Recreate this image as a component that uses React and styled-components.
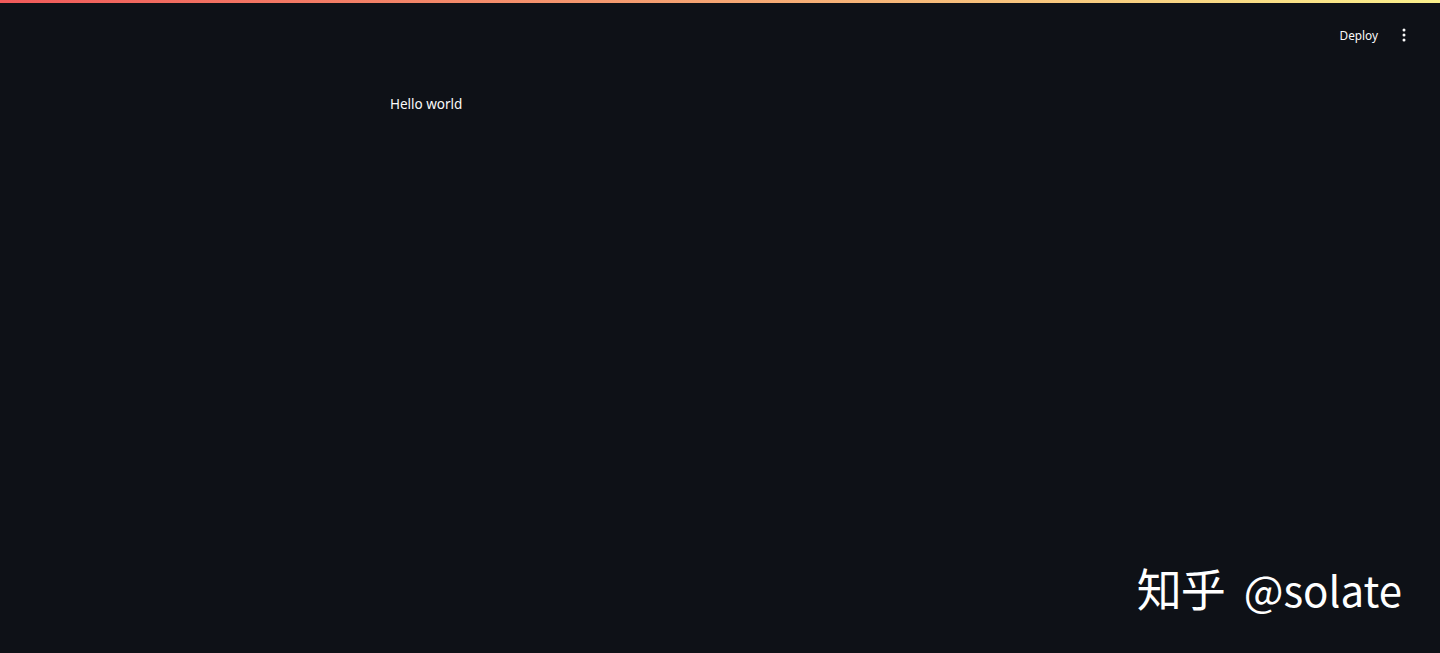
import React from "react";
import styled, { createGlobalStyle } from "styled-components";

const GlobalStyle = createGlobalStyle`
  html, body {
    margin: 0;
    padding: 0;
    background: #0e1117;
  }
  body {
    font-family: "Noto Sans", "Open Sans", sans-serif;
    color: #fafafa;
  }
`;

const Page = styled.div`
  position: relative;
  height: 653px;
  overflow: hidden;
  background: #0e1117;
`;

const Decoration = styled.div`
  height: 3px;
  background: linear-gradient(90deg, rgb(240, 90, 90), rgb(250, 240, 140));
`;

const Header = styled.header`
  height: 64px;
  display: flex;
  align-items: center;
  justify-content: flex-end;
  padding: 0 30px 0 0;
  gap: 18px;
`;

const DeployButton = styled.button`
  background: transparent;
  border: none;
  color: #fafafa;
  font-family: "Noto Sans", sans-serif;
  font-size: 11.8px;
  padding: 4px 2px;
  cursor: pointer;
`;

const MenuButton = styled.button`
  background: transparent;
  border: none;
  padding: 4px;
  display: flex;
  align-items: center;
  cursor: pointer;
`;

const Main = styled.main`
  max-width: 660px;
  margin: 0 auto;
  padding-top: 27px;
`;

const Text = styled.p`
  margin: 0;
  font-size: 13.5px;
  line-height: 20px;
  color: #fafafa;
`;

const Watermark = styled.div`
  position: absolute;
  right: 38px;
  bottom: 38px;
  display: flex;
  align-items: baseline;
  font-family: "Noto Sans CJK SC", "Noto Sans", sans-serif;
  font-size: 42px;
  line-height: 1.2;
  color: #ffffff;
  white-space: nowrap;
`;

const Brand = styled.span`
  font-size: 45px;
  letter-spacing: -1px;
  margin-right: 19px;
`;

function KebabIcon() {
  return (
    <svg width="4" height="14" viewBox="0 0 4 14">
      <circle cx="2" cy="2" r="1.5" fill="#fafafa" />
      <circle cx="2" cy="7" r="1.5" fill="#fafafa" />
      <circle cx="2" cy="12" r="1.5" fill="#fafafa" />
    </svg>
  );
}

export default function App() {
  return (
    <>
      <GlobalStyle />
      <Page>
        <Decoration />
        <Header>
          <DeployButton>Deploy</DeployButton>
          <MenuButton>
            <KebabIcon />
          </MenuButton>
        </Header>
        <Main>
          <Text>Hello world</Text>
        </Main>
        <Watermark>
          <Brand>知乎</Brand>
          <span>@solate</span>
        </Watermark>
      </Page>
    </>
  );
}
